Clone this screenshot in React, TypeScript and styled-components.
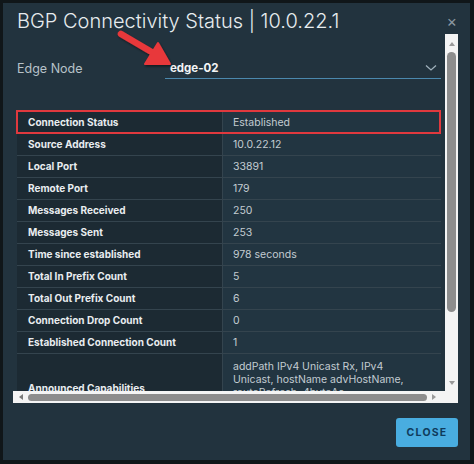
import { Fragment } from "react"
import styled, { createGlobalStyle } from "styled-components"

const GlobalStyle = createGlobalStyle`
  html, body {
    margin: 0;
    padding: 0;
    background: #0f1418;
  }
  * {
    box-sizing: border-box;
  }
`

const Frame = styled.div`
  width: 474px;
  height: 464px;
  border: 3px solid #101619;
  border-right-width: 4px;
  border-bottom-width: 4px;
  background: #22333e;
  font-family: Inter, "Noto Sans", sans-serif;
  position: relative;
  display: flex;
  flex-direction: column;
  padding: 0 12px 0 10px;
  overflow: hidden;
`

const Header = styled.div`
  height: 31px;
  display: flex;
  align-items: center;
  justify-content: space-between;
  padding: 4px 0 0 4px;
`

const Title = styled.h1`
  margin: 0;
  font-size: 20px;
  font-weight: 300;
  color: #e7ecef;
  white-space: nowrap;
`

const CloseX = styled.span`
  color: #8b98a1;
  font-size: 16px;
  line-height: 1;
  margin-right: 1px;
`

const ScrollFrame = styled.div`
  display: grid;
  grid-template-columns: 1fr 13px;
  grid-template-rows: 1fr 12px;
  height: 369px;
`

const Content = styled.div`
  overflow: hidden;
  padding: 24px 4px 0 4px;
`

const NodeRow = styled.div`
  display: flex;
  align-items: center;
  height: 21px;
`

const NodeLabel = styled.label`
  width: 148px;
  font-size: 12.5px;
  color: #b7c2c9;
`

const Select = styled.div`
  flex: 1;
  height: 21px;
  display: flex;
  align-items: center;
  justify-content: space-between;
  padding: 0 4px 0 5px;
  border-bottom: 1px solid #4b88ad;
  color: #f3f5f6;
  font-size: 11.5px;
  font-weight: 700;
`

const Table = styled.div`
  margin-top: 32px;
  display: grid;
  grid-template-columns: 205px 1fr;
  border-top: 1px solid #33434d;
  position: relative;
`

const Cell = styled.div<{ $value?: boolean; $tall?: boolean }>`
  height: ${(p) => (p.$tall ? "70px" : "22px")};
  display: flex;
  align-items: ${(p) => (p.$tall && p.$value ? "flex-start" : "center")};
  padding: ${(p) => (p.$tall && p.$value ? "6px 24px 0 10px" : p.$value ? "0 10px" : "0 11px")};
  border-bottom: 1px solid #34444e;
  border-left: ${(p) => (p.$value ? "1px solid #34444e" : "none")};
  background: ${(p) => (p.$value ? "#223541" : "#1c2a33")};
  color: ${(p) => (p.$value ? "#c3ccd2" : "#e9edf0")};
  font-size: ${(p) => (p.$value ? "10.5px" : "10px")};
  font-weight: ${(p) => (p.$value ? 400 : 700)};
  line-height: 13px;
  white-space: ${(p) => (p.$tall ? "normal" : "nowrap")};
`

const Highlight = styled.div`
  position: absolute;
  left: -1px;
  top: -2px;
  width: calc(100% + 1px);
  height: 24px;
  border: 2px solid #e0393e;
  pointer-events: none;
`

const VBar = styled.div`
  background: #f4f4f4;
  display: flex;
  flex-direction: column;
  align-items: center;
  padding: 8px 0 6px;
`

const HBar = styled.div`
  background: #f4f4f4;
  display: flex;
  align-items: center;
  padding: 0 9px 0 6px;
  gap: 5px;
`

const Corner = styled.div`
  background: #f4f4f4;
`

const VThumb = styled.div`
  width: 9px;
  height: 260px;
  margin-top: 6px;
  border-radius: 5px;
  background: #8d8d8d;
`

const HThumb = styled.div`
  flex: 1;
  height: 7px;
  border-radius: 4px;
  background: #8d8d8d;
`

const Spacer = styled.div`
  flex: 1;
`

const Tri = styled.span<{ $dir: "up" | "down" | "left" | "right" }>`
  width: 0;
  height: 0;
  border: 3px solid transparent;
  ${(p) =>
    p.$dir === "up"
      ? "border-bottom: 4px solid #9a9a9a; border-top-width: 0;"
      : p.$dir === "down"
      ? "border-top: 4px solid #9a9a9a; border-bottom-width: 0;"
      : p.$dir === "left"
      ? "border-right: 4px solid #7a7a7a; border-left-width: 0;"
      : "border-left: 4px solid #9a9a9a; border-right-width: 0;"}
`

const Footer = styled.div`
  flex: 1;
  display: flex;
  justify-content: flex-end;
  align-items: flex-start;
  padding-top: 15px;
`

const CloseButton = styled.button`
  width: 62px;
  height: 29px;
  border: none;
  border-radius: 3px;
  background: #49ade0;
  color: #0f3b5c;
  font-family: inherit;
  font-size: 10.5px;
  font-weight: 700;
  letter-spacing: 1.2px;
  cursor: pointer;
`

const Arrow = styled.svg`
  position: absolute;
  left: 108px;
  top: 22px;
  width: 70px;
  height: 48px;
  pointer-events: none;
`

const rows: [string, string][] = [
  ["Connection Status", "Established"],
  ["Source Address", "10.0.22.12"],
  ["Local Port", "33891"],
  ["Remote Port", "179"],
  ["Messages Received", "250"],
  ["Messages Sent", "253"],
  ["Time since established", "978 seconds"],
  ["Total In Prefix Count", "5"],
  ["Total Out Prefix Count", "6"],
  ["Connection Drop Count", "0"],
  ["Established Connection Count", "1"],
]

const App = (): JSX.Element => {
  return (
    <>
      <GlobalStyle />
      <Frame>
        <Header>
          <Title>BGP Connectivity Status | 10.0.22.1</Title>
          <CloseX>×</CloseX>
        </Header>
        <ScrollFrame>
          <Content>
            <NodeRow>
              <NodeLabel>Edge Node</NodeLabel>
              <Select>
                edge-02
                <svg width="12" height="8" viewBox="0 0 12 8">
                  <path d="M1 1.5 L6 6 L11 1.5" fill="none" stroke="#9fb0bb" strokeWidth="1.3" />
                </svg>
              </Select>
            </NodeRow>
            <Table>
              {rows.map(([k, v]) => (
                <Fragment key={k}>
                  <Cell>{k}</Cell>
                  <Cell $value>{v}</Cell>
                </Fragment>
              ))}
              <Cell $tall>Announced Capabilities</Cell>
              <Cell $tall $value>
                addPath IPv4 Unicast Rx, IPv4 Unicast, hostName advHostName, routeRefresh, 4byteAs
              </Cell>
              <Highlight />
            </Table>
          </Content>
          <VBar>
            <Tri $dir="up" />
            <VThumb />
            <Spacer />
            <Tri $dir="down" />
          </VBar>
          <HBar>
            <Tri $dir="left" />
            <HThumb />
            <Tri $dir="right" />
          </HBar>
          <Corner />
        </ScrollFrame>
        <Footer>
          <CloseButton>CLOSE</CloseButton>
        </Footer>
        <Arrow viewBox="0 0 70 48">
          <defs>
            <filter id="sh" x="-20%" y="-20%" width="140%" height="140%">
              <feDropShadow dx="1" dy="1.5" stdDeviation="1" floodColor="#000" floodOpacity="0.5" />
            </filter>
          </defs>
          <g filter="url(#sh)">
            <path d="M10 9 L44 29" stroke="#e8383b" strokeWidth="6.5" strokeLinecap="round" />
            <path d="M59 39 L34 39 L47 18 Z" fill="#e8383b" strokeLinejoin="round" stroke="#e8383b" strokeWidth="2" />
          </g>
        </Arrow>
      </Frame>
    </>
  )
}

export default App
